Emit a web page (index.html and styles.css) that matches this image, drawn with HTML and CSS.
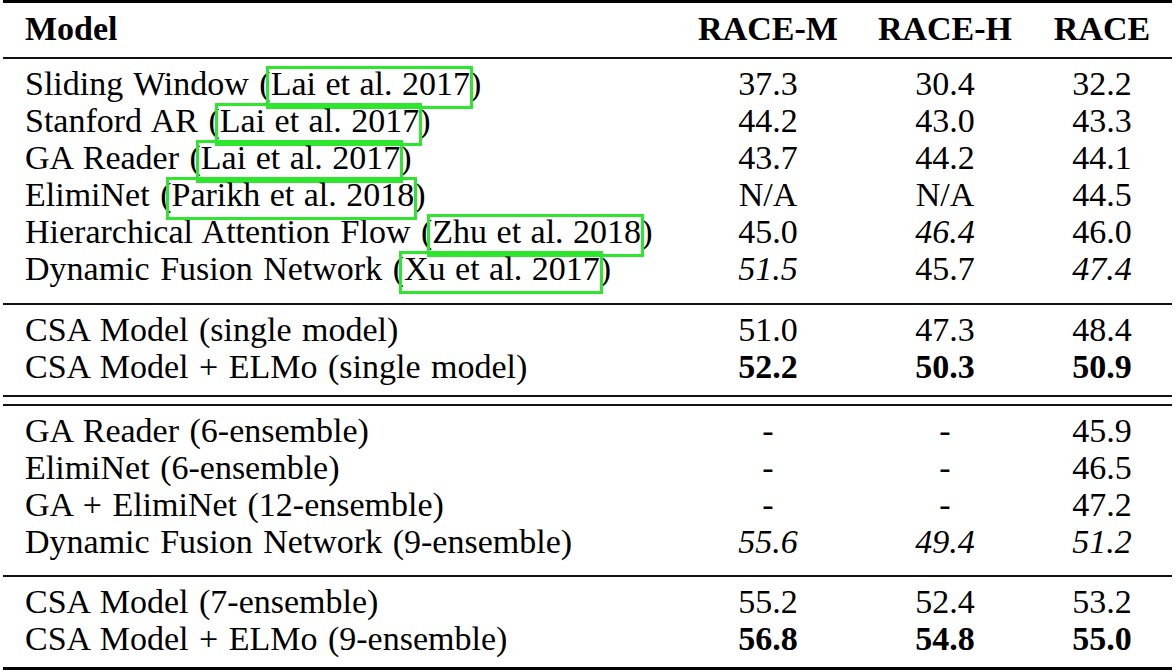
FILE: index.html
```html
<!DOCTYPE html>
<html>
<head>
<meta charset="utf-8">
<link rel="stylesheet" href="styles.css">
</head>
<body>
<table class="results">
  <colgroup>
    <col class="c-model">
    <col class="c-m">
    <col class="c-h">
    <col class="c-all">
  </colgroup>
  <thead>
    <tr>
      <th class="model">Model</th>
      <th>RACE-M</th>
      <th>RACE-H</th>
      <th>RACE</th>
    </tr>
  </thead>
  <tbody class="sec sec1">
    <tr><td class="model">Sliding Window (<span class="cite">Lai et al. 2017</span>)</td><td>37.3</td><td>30.4</td><td>32.2</td></tr>
    <tr><td class="model">Stanford AR (<span class="cite">Lai et al. 2017</span>)</td><td>44.2</td><td>43.0</td><td>43.3</td></tr>
    <tr><td class="model">GA Reader (<span class="cite">Lai et al. 2017</span>)</td><td>43.7</td><td>44.2</td><td>44.1</td></tr>
    <tr><td class="model">ElimiNet (<span class="cite">Parikh et al. 2018</span>)</td><td>N/A</td><td>N/A</td><td>44.5</td></tr>
    <tr><td class="model">Hierarchical Attention Flow (<span class="cite">Zhu et al. 2018</span>)</td><td>45.0</td><td><i>46.4</i></td><td>46.0</td></tr>
    <tr><td class="model">Dynamic Fusion Network (<span class="cite">Xu et al. 2017</span>)</td><td><i>51.5</i></td><td>45.7</td><td><i>47.4</i></td></tr>
  </tbody>
  <tbody class="sec sec2">
    <tr><td class="model">CSA Model (single model)</td><td>51.0</td><td>47.3</td><td>48.4</td></tr>
    <tr><td class="model">CSA Model + ELMo (single model)</td><td><b>52.2</b></td><td><b>50.3</b></td><td><b>50.9</b></td></tr>
  </tbody>
  <tbody class="gap">
    <tr><td colspan="4"></td></tr>
  </tbody>
  <tbody class="sec sec3">
    <tr><td class="model">GA Reader (6-ensemble)</td><td>-</td><td>-</td><td>45.9</td></tr>
    <tr><td class="model">ElimiNet (6-ensemble)</td><td>-</td><td>-</td><td>46.5</td></tr>
    <tr><td class="model">GA + ElimiNet (12-ensemble)</td><td>-</td><td>-</td><td>47.2</td></tr>
    <tr><td class="model">Dynamic Fusion Network (9-ensemble)</td><td><i>55.6</i></td><td><i>49.4</i></td><td><i>51.2</i></td></tr>
  </tbody>
  <tbody class="sec sec4">
    <tr><td class="model">CSA Model (7-ensemble)</td><td>55.2</td><td>52.4</td><td>53.2</td></tr>
    <tr><td class="model">CSA Model + ELMo (9-ensemble)</td><td><b>56.8</b></td><td><b>54.8</b></td><td><b>55.0</b></td></tr>
  </tbody>
</table>
</body>
</html>
```

FILE: styles.css
```css
html, body {
  margin: 0;
  padding: 0;
  background: #ffffff;
}

body {
  width: 1176px;
  height: 672px;
  overflow: hidden;
  color: #000000;
  font-family: "Liberation Serif", "Times New Roman", serif;
  font-size: 34px;
}

.results {
  margin-left: 3px;
  width: 1169px;
  table-layout: fixed;
  border-collapse: collapse;
  border-top: 3px solid #000;
  border-bottom: 3px solid #000;
}

.c-model { width: 675px; }
.c-m { width: 180px; }
.c-h { width: 174px; }
.c-all { width: 140px; }

.results th,
.results td {
  padding: 0;
  line-height: 37px;
  text-align: center;
  white-space: nowrap;
  font-weight: normal;
}

.results th {
  font-weight: bold;
  padding-top: 7px;
  padding-bottom: 10px;
}

.results .model {
  text-align: left;
  padding-left: 22px;
}

.results td.model {
  word-spacing: 2px;
}

.results thead {
  border-bottom: 2px solid #111;
}

.sec tr:first-child td {
  padding-top: 6px;
}

.sec tr:last-child td {
  padding-bottom: 16px;
}

.sec2 tr:last-child td {
  padding-bottom: 10px;
}

.sec4 tr:last-child td {
  padding-bottom: 10px;
}

.sec1,
.sec3 {
  border-bottom: 2px solid #111;
}

.sec3 tr:last-child td {
  padding-bottom: 15px;
}

.gap {
  border-top: 2px solid #111;
  border-bottom: 2px solid #111;
}

.gap td {
  height: 7px;
  line-height: 7px;
  padding: 0;
}

.cite {
  position: relative;
  word-spacing: 1px;
}

.cite::after {
  content: "";
  position: absolute;
  left: -5px;
  right: -3px;
  top: 1px;
  bottom: -7px;
  border: 3px solid #2ee62e;
  pointer-events: none;
}
```
